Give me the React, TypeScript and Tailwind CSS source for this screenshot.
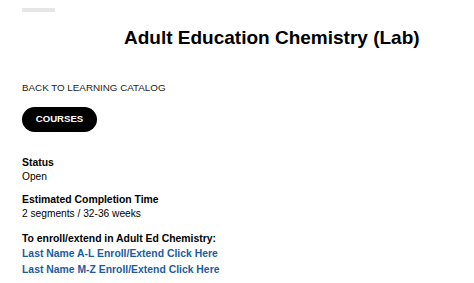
export default function App() {
  return (
    <div className="w-[474px] h-[283px] bg-white overflow-hidden font-['Liberation_Sans',Arial,sans-serif] text-black">
      <div className="pt-[8px] pl-[22px]">
        <div className="w-[33px] h-[4px] bg-[#e6e6e6]" />
      </div>
      <h1 className="mt-[14px] pl-[124px] text-[19px] leading-[24px] font-bold">
        Adult Education Chemistry (Lab)
      </h1>
      <div className="px-[22px]">
        <a className="block mt-[31px] text-[9.8px] leading-[14px] text-[#222]">BACK TO LEARNING CATALOG</a>
        <button className="mt-[12px] w-[75px] h-[25px] rounded-full bg-black text-white text-[9.6px] font-bold">
          COURSES
        </button>
        <div className="mt-[24px] text-[10.4px] leading-[14px]">
          <div className="font-bold">Status</div>
          <div className="text-[10.2px]">Open</div>
          <div className="mt-[9px] font-bold">Estimated Completion Time</div>
          <div className="text-[10.2px]">2 segments / 32-36 weeks</div>
          <div className="mt-[11px] font-bold">To enroll/extend in Adult Ed Chemistry:</div>
          <a className="block font-bold text-[#1c5c9e] leading-[16px]">Last Name A-L Enroll/Extend Click Here</a>
          <a className="block font-bold text-[#1c5c9e] leading-[16px]">Last Name M-Z Enroll/Extend Click Here</a>
        </div>
      </div>
    </div>
  );
}
